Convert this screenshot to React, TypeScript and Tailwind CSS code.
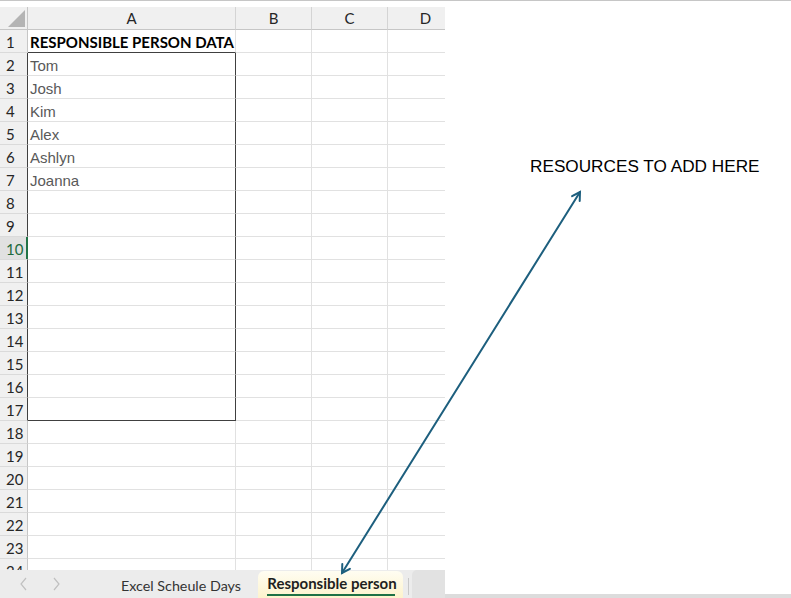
import React from "react";

const names: Record<number, string> = { 2: "Tom", 3: "Josh", 4: "Kim", 5: "Alex", 6: "Ashlyn", 7: "Joanna" };
const rows = Array.from({ length: 24 }, (_, i) => i + 1);

function Row({ n }: { n: number }) {
  const inBox = n >= 2 && n <= 17;
  const boxBottom = n === 1 || n === 17;
  const sel = n === 10;
  return (
    <div className="flex h-[23px] shrink-0">
      <div
        className={`relative w-[28px] shrink-0 border-b border-r ${sel ? "bg-[#e1e1e1] text-[#1e6b3e]" : "bg-[#f0f0f0] text-[#262626]"} ${inBox ? "border-r-[#404040]" : "border-r-[#c6c6c6]"} border-b-[#dadada] pl-[6px] pt-px text-[15px] leading-[22px] font-['Lato',sans-serif]`}
      >
        {n}
        {sel && <div className="absolute right-[-1px] top-0 h-[22px] w-[2px] bg-[#217346]" />}
      </div>
      <div
        className={`w-[208px] shrink-0 border-b border-r ${boxBottom ? "border-b-[#404040]" : "border-b-[#e1e1e1]"} ${inBox ? "border-r-[#404040]" : "border-r-[#e1e1e1]"} pl-[2px] pt-px leading-[22px] whitespace-nowrap`}
      >
        {n === 1 ? (
          <span className="font-['Lato',sans-serif] text-[15px] font-bold text-black">RESPONSIBLE PERSON DATA</span>
        ) : (
          <span className="font-['Liberation_Sans',sans-serif] text-[15px] text-[#595959]">{names[n] ?? ""}</span>
        )}
      </div>
      <div className="w-[76px] shrink-0 border-b border-r border-[#e1e1e1]" />
      <div className="w-[76px] shrink-0 border-b border-r border-[#e1e1e1]" />
      <div className="w-[76px] shrink-0 border-b border-r border-[#e1e1e1]" />
    </div>
  );
}

export default function App() {
  return (
    <div className="relative h-[598px] w-[791px] overflow-hidden bg-white">
      <div className="h-px w-full bg-[#c6c6c6]" />
      <div className="flex h-[597px]">
        {/* sheet */}
        <div className="flex w-[445px] shrink-0 flex-col overflow-hidden">
          <div className="h-[6px] shrink-0" />
          {/* column header */}
          <div className="flex h-[23px] shrink-0 bg-[#f0f0f0] font-['Lato',sans-serif] text-[15px] text-[#262626]">
            <div className="relative w-[28px] shrink-0 border-b border-r border-[#c6c6c6]">
              <svg className="absolute left-[8px] top-[3px]" width="17" height="17" viewBox="0 0 17 17">
                <polygon points="17,0 17,17 0,17" fill="#b4b4b4" />
              </svg>
            </div>
            <div className="flex w-[208px] shrink-0 items-center justify-center border-b border-r border-b-[#c6c6c6] border-r-[#d4d4d4]">A</div>
            <div className="flex w-[76px] shrink-0 items-center justify-center border-b border-r border-b-[#c6c6c6] border-r-[#d4d4d4]">B</div>
            <div className="flex w-[76px] shrink-0 items-center justify-center border-b border-r border-b-[#c6c6c6] border-r-[#d4d4d4]">C</div>
            <div className="flex w-[76px] shrink-0 items-center justify-center border-b border-r border-b-[#c6c6c6] border-r-[#d4d4d4]">D</div>
          </div>
          {/* body */}
          <div className="flex h-[540px] shrink-0 flex-col overflow-hidden">
            {rows.map((n) => (
              <Row key={n} n={n} />
            ))}
          </div>
          {/* tab bar */}
          <div className="flex h-[28px] shrink-0 items-stretch bg-[#ececec] font-['Lato',sans-serif] text-[15px]">
            <div className="flex w-[88px] shrink-0 items-center gap-[24px] pl-[19px] text-[#c0c0c0]">
              <svg width="9" height="14" viewBox="0 0 9 14"><path d="M7 1 L2 7 L7 13" fill="none" stroke="#c0c0c0" strokeWidth="1.2" /></svg>
              <svg width="9" height="14" viewBox="0 0 9 14"><path d="M2 1 L7 7 L2 13" fill="none" stroke="#c0c0c0" strokeWidth="1.2" /></svg>
            </div>
            <div className="flex w-[170px] shrink-0 items-center pl-[33px] pt-[4px] text-[14.3px] text-[#333333]">Excel Scheule Days</div>
            <div className="mt-px flex w-[145px] shrink-0 flex-col items-center justify-end rounded-t-[6px] bg-gradient-to-b from-[#fffdf2] to-[#fdf3cc] pb-[2px]">
              <span className="pl-[3px] font-bold leading-[18px] text-[#1f1f1f]">Responsible person</span>
              <div className="mt-[2px] h-[2px] w-[128px] bg-[#1e7145]" />
            </div>
            <div className="ml-[5px] mt-[8px] mb-[3px] w-px bg-[#c8c8c8]" />
            <div className="ml-[3px] flex-1 rounded-tl-[5px] bg-[#e2e2e2]" />
          </div>
        </div>
        {/* right canvas */}
        <div className="flex flex-1 flex-col">
          <div className="flex-1 pl-[85px] pt-[153px] font-['Liberation_Sans',Arial,sans-serif] text-[17.2px] text-black whitespace-nowrap">
            RESOURCES TO ADD HERE
          </div>
          <div className="h-[4px] bg-[#dcdcdc]" />
        </div>
      </div>
      {/* arrow */}
      <svg className="pointer-events-none absolute left-0 top-0" width="791" height="598" viewBox="0 0 791 598">
        <g stroke="#1d5f7e" strokeWidth="2" fill="none" strokeLinecap="round">
          <line x1="342" y1="573" x2="580" y2="192" />
          <polyline points="572.1,196.2 580,192 579.7,201" />
          <polyline points="349.9,568.8 342,573 342.3,564" />
        </g>
      </svg>
    </div>
  );
}
